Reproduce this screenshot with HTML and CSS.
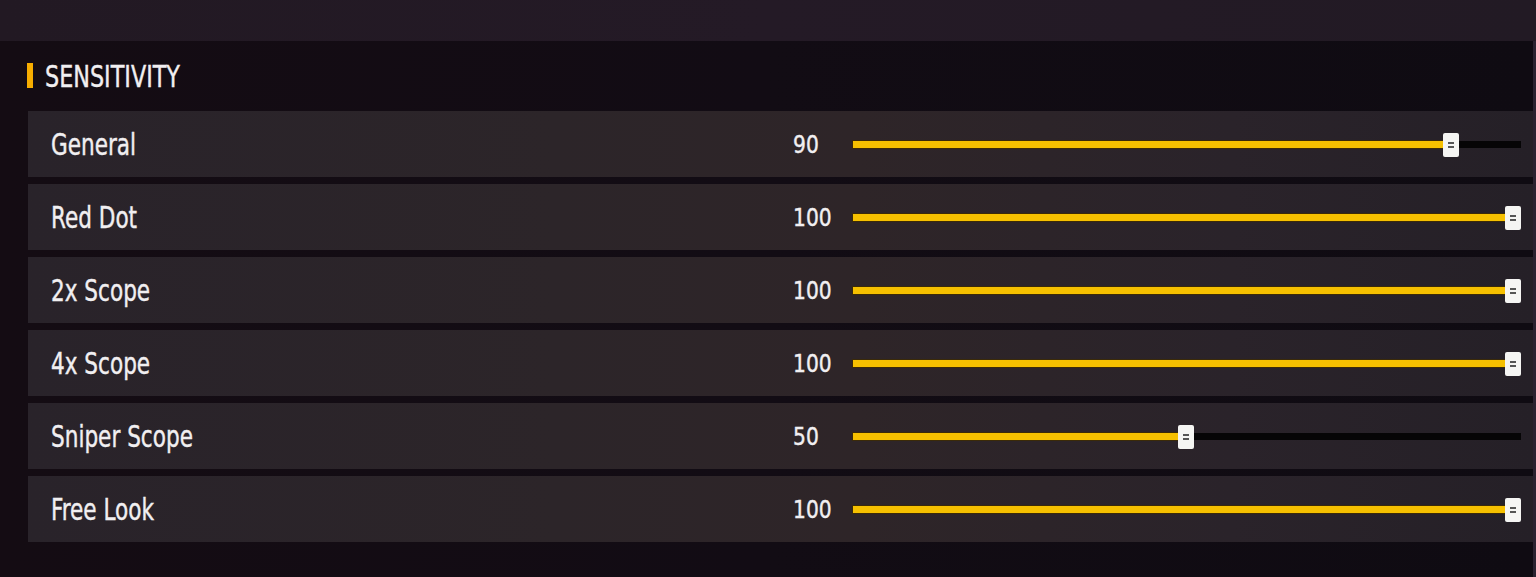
FILE: index.html
```html
<!DOCTYPE html>
<html lang="en">
<head>
  <meta charset="UTF-8">
  <meta name="viewport" content="width=device-width, initial-scale=1.0">
  <title>Sensitivity Settings</title>
  <link rel="stylesheet" href="styles.css">
</head>
<body>

  <!-- Top band -->
  <div class="topbar"></div>

  <!-- Settings panel -->
  <section class="panel">
    <h2 class="panel-title"><span class="title-mark"></span><span class="title-text">SENSITIVITY</span></h2>

    <div class="rows">
      <div class="row">
        <span class="label">General</span>
        <span class="value">90</span>
        <div class="slider">
          <div class="fill" style="width: 598px"></div>
          <div class="thumb" style="left: 590px"><i></i><i></i></div>
        </div>
      </div>
      <div class="row">
        <span class="label">Red Dot</span>
        <span class="value">100</span>
        <div class="slider">
          <div class="fill" style="width: 660px"></div>
          <div class="thumb" style="left: 652px"><i></i><i></i></div>
        </div>
      </div>
      <div class="row">
        <span class="label">2x Scope</span>
        <span class="value">100</span>
        <div class="slider">
          <div class="fill" style="width: 660px"></div>
          <div class="thumb" style="left: 652px"><i></i><i></i></div>
        </div>
      </div>
      <div class="row">
        <span class="label">4x Scope</span>
        <span class="value">100</span>
        <div class="slider">
          <div class="fill" style="width: 660px"></div>
          <div class="thumb" style="left: 652px"><i></i><i></i></div>
        </div>
      </div>
      <div class="row">
        <span class="label">Sniper Scope</span>
        <span class="value">50</span>
        <div class="slider">
          <div class="fill" style="width: 333px"></div>
          <div class="thumb" style="left: 325px"><i></i><i></i></div>
        </div>
      </div>
      <div class="row">
        <span class="label">Free Look</span>
        <span class="value">100</span>
        <div class="slider">
          <div class="fill" style="width: 660px"></div>
          <div class="thumb" style="left: 652px"><i></i><i></i></div>
        </div>
      </div>
    </div>
  </section>

</body>
</html>
```

FILE: styles.css
```css
body {
  margin: 0;
  height: 577px;
  overflow: hidden;
  background-color: #2a2230;
  font-family: "DejaVu Sans Condensed", "DejaVu Sans", sans-serif;
  font-stretch: condensed;
  color: #f1eff1;
}

/* Top band */
.topbar {
  height: 41px;
  background: linear-gradient(90deg, #221923 0%, #241a26 50%, #221a24 100%);
}

/* Panel */
.panel {
  width: 1533px;
  height: 536px;
  background: linear-gradient(90deg, #140c13 0%, #120c14 50%, #0f0b12 100%);
}

.panel-title {
  margin: 0;
  height: 70px;
  display: flex;
  align-items: center;
  padding-left: 27px;
  font-size: 31px;
  font-weight: normal;
}

.title-mark {
  width: 6px;
  height: 25px;
  background-color: #f7ad00;
  margin-right: 12px;
  margin-top: -2px;
}

/* the game font is narrower than anything installed */
.title-text,
.label,
.value {
  display: inline-block;
  transform-origin: left center;
  white-space: nowrap;
  -webkit-text-stroke: 0.4px #f1eff1;
}

.title-text {
  transform: scaleX(0.8);
}

/* Rows */
.rows {
  display: flex;
  flex-direction: column;
  gap: 7px;
  padding-left: 28px;
}

.row {
  height: 66px;
  display: grid;
  grid-template-columns: 742px 60px 668px;
  align-items: center;
  padding-left: 23px;
  background: linear-gradient(90deg, #29232a 0%, #2c2529 35%, #2e2528 55%, #2a232a 80%, #252027 100%);
}

.label {
  font-size: 30px;
  transform: scaleX(0.8);
}

.value {
  font-size: 25px;
  transform: scaleX(0.9);
}

/* Slider */
.slider {
  position: relative;
  height: 7px;
  background-color: #060506;
}

.fill {
  height: 7px;
  background-color: #f6c000;
  box-shadow: 0 0 0 1px #3b2a08;
}

.thumb {
  position: absolute;
  top: -8px;
  width: 16px;
  height: 24px;
  background-color: #f5f5f3;
  border-radius: 2px;
  display: flex;
  flex-direction: column;
  align-items: center;
  justify-content: center;
  gap: 2px;
}

.thumb i {
  display: block;
  width: 6px;
  height: 2px;
  background-color: #555555;
}
```
